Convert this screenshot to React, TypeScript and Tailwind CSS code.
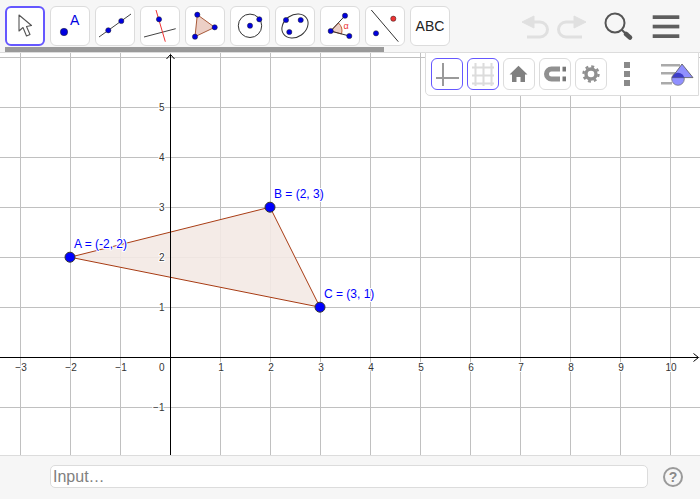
const F = { fontFamily: '"Liberation Sans", Arial, sans-serif' };

function Btn({ children, active }: { children: React.ReactNode; active?: boolean }) {
  return (
    <div className={active ? "w-[40px] h-[40px] shrink-0 rounded-[6px] border-2 border-[#6557ff] bg-white flex items-center justify-center" : "w-[40px] h-[40px] shrink-0 rounded-[6px] border border-[#dcdcdc] bg-white flex items-center justify-center"}>
      <svg width="38" height="38" viewBox="0 0 38 38" className="shrink-0">{children}</svg>
    </div>
  );
}
const P = ({ x, y, r = 3, c = "#0000e0" }: { x: number; y: number; r?: number; c?: string }) => (
  <circle cx={x} cy={y} r={r} fill={c} stroke="#222" strokeWidth="0.5" />
);

function Tools() {
  return (
    <div className="flex gap-[5px]">
      <Btn active>
        <path d="M13 8 L13 24 L17 20.5 L20.5 29 L24 27.5 L20.5 19.5 L25.5 18.5 Z" fill="#fff" stroke="#555" strokeWidth="1.1" strokeLinejoin="round" />
      </Btn>
      <Btn>
        <circle cx="13" cy="25" r="3.7" fill="#0000e0" stroke="#222" strokeWidth="0.5" />
        <text x="19" y="18" fontSize="14" fill="#0000e0" style={F}>A</text>
      </Btn>
      <Btn>
        <line x1="3" y1="30" x2="35" y2="7" stroke="#444" strokeWidth="1" />
        <P x={12.3} y={23.3} r={2.6} /><P x={25.3} y={14} r={2.6} />
      </Btn>
      <Btn>
        <line x1="3" y1="30" x2="34.7" y2="21.7" stroke="#444" strokeWidth="1" />
        <line x1="15" y1="3" x2="24.3" y2="34.7" stroke="#ee3333" strokeWidth="1" />
        <P x={18} y={12.3} r={2.6} />
      </Btn>
      <Btn>
        <path d="M11.3 7.7 L9 29.7 L28.7 20.3 Z" fill="#eccfc6" stroke="#a85a3a" strokeWidth="1" />
        <P x={11.3} y={7.7} r={2.6} /><P x={9} y={29.7} r={2.6} /><P x={28.7} y={20.3} r={2.6} />
      </Btn>
      <Btn>
        <circle cx="19" cy="18.8" r="11.7" fill="none" stroke="#333" strokeWidth="1" />
        <P x={19} y={18.7} r={2.6} /><P x={28.3} y={12.3} r={2.6} />
      </Btn>
      <Btn>
        <ellipse cx="19" cy="19" rx="14" ry="11" fill="none" stroke="#333" strokeWidth="1" transform="rotate(-35 19 19)" />
        <P x={10} y={13} r={2.6} /><P x={24.7} y={13} r={2.6} /><P x={13.3} y={25} r={2.6} />
      </Btn>
      <Btn>
        <path d="M9.7 24 L17.5 16 A11 11 0 0 1 20.5 27 Z" fill="#eccfc6" stroke="#c0603a" strokeWidth="1" />
        <line x1="9.7" y1="24" x2="24" y2="8.7" stroke="#333" strokeWidth="1" />
        <line x1="9.7" y1="24" x2="28.3" y2="29" stroke="#333" strokeWidth="1" />
        <P x={9.7} y={24} r={2.6} /><P x={24} y={8.7} r={2.6} /><P x={28.3} y={29} r={2.6} />
        <text x="22.5" y="22" fontSize="9" fill="#ee3333" style={F}>α</text>
      </Btn>
      <Btn>
        <line x1="5.3" y1="3" x2="32.3" y2="34.7" stroke="#333" strokeWidth="1" />
        <P x={10} y={26.3} r={2.6} /><P x={27.3} y={11.7} r={2.6} c="#ee3333" />
      </Btn>
      <div className="w-[40px] h-[40px] shrink-0 rounded-[6px] border border-[#dcdcdc] bg-white flex items-center justify-center text-[14px] text-[#222]" style={F}>ABC</div>
    </div>
  );
}

function Header() {
  return (
    <div className="h-[53px] shrink-0 bg-[#f6f6f6] relative flex pl-[5px] pt-[6px] border-b border-[#dcdcdc]">
      <Tools />
      <div className="absolute left-[5px] top-[47px] w-[379px] h-[5px] bg-[#9a9a9a]" />
      <div className="ml-auto pr-[6px] flex items-start">
        <svg width="190" height="40" viewBox="0 0 190 40" className="-mt-[2px]" fill="none">
          <g stroke="#e0e0e0" strokeWidth="3">
            <path d="M30 18 H36 A7.5 7.5 0 0 1 36 33 H23" />
            <path d="M30 12 L18 18 L30 24 Z" fill="#e0e0e0" strokeWidth="1" />
            <path d="M70 18 H62 A7.5 7.5 0 0 0 62 33 H78" />
            <path d="M70 12 L82 18 L70 24 Z" fill="#e0e0e0" strokeWidth="1" />
          </g>
          <circle cx="111" cy="19" r="9.5" stroke="#555" strokeWidth="2" />
          <line x1="118" y1="26" x2="122" y2="30" stroke="#555" strokeWidth="2" />
          <line x1="122" y1="30" x2="126" y2="33.5" stroke="#555" strokeWidth="4.6" strokeLinecap="round" />
          <g fill="#5e5e5e">
            <rect x="148.7" y="11.3" width="26.6" height="3.7" />
            <rect x="148.7" y="20.7" width="26.6" height="3.7" />
            <rect x="148.7" y="30.3" width="26.6" height="3.7" />
          </g>
        </svg>
      </div>
    </div>
  );
}

function Plot() {
  const xs = Array.from({ length: 14 }, (_, i) => 20.5 + i * 50);
  const ys = Array.from({ length: 8 }, (_, i) => 57.5 + i * 50);
  const xl = [-3, -2, -1, 1, 2, 3, 4, 5, 6, 7, 8, 9, 10];
  const yl = [5, 4, 3, 2, 1, -1];
  const fmt = (n: number) => (n < 0 ? "\u2212" + -n : String(n));
  const halo = { paintOrder: "stroke" as const, stroke: "#fff", strokeWidth: 2, strokeLinejoin: "round" as const };
  const pts = "70,257.2 270,207.2 320,307.2";
  return (
    <svg width="700" height="402" viewBox="0 53 700 402" className="block shrink-0" style={F}>
      <rect x="0" y="53" width="700" height="402" fill="#fff" />
      {xs.map((x) => <line key={x} x1={x} x2={x} y1="53" y2="455" stroke="#c0c0c0" strokeWidth="1" />)}
      {ys.map((y) => <line key={y} y1={y} y2={y} x1="0" x2="700" stroke="#c0c0c0" strokeWidth="1" />)}
      <polygon points={pts} fill="#f3e9e4" fillOpacity="0.9" />
      <polygon points={pts} fill="none" stroke="#a83c14" strokeWidth="1" />
      <line x1="170.5" x2="170.5" y1="55" y2="455" stroke="#000" />
      <line y1="357.5" y2="357.5" x1="0" x2="698" stroke="#000" />
      <path d="M166.5 59 L170.5 54.5 L174.5 59" fill="none" stroke="#000" />
      <path d="M693.5 353.5 L698.5 357.5 L693.5 361.5" fill="none" stroke="#000" />
      {xl.map((n) => (
        <text key={n} x={171 + n * 50} y="371" fontSize="10" fill="#333" textAnchor="middle" {...halo}>{fmt(n)}</text>
      ))}
      {yl.map((n) => (
        <text key={n} x="164.5" y={361 - n * 50} fontSize="10" fill="#333" textAnchor="end" {...halo}>{fmt(n)}</text>
      ))}
      <text x="164.5" y="371" fontSize="10" fill="#333" textAnchor="end" {...halo}>0</text>
      {[[70, 257.2], [270, 207.2], [320, 307.2]].map(([x, y]) => (
        <circle key={x} cx={x} cy={y} r="5" fill="#0000ff" stroke="#333" strokeWidth="1" />
      ))}
      <text x="74" y="248" fontSize="12" fill="#0000ff" {...halo}>A = (-2, 2)</text>
      <text x="274" y="198" fontSize="12" fill="#0000ff" {...halo}>B = (2, 3)</text>
      <text x="324" y="298" fontSize="12" fill="#0000ff" {...halo}>C = (3, 1)</text>
    </svg>
  );
}

function SBtn({ children, active }: { children: React.ReactNode; active?: boolean }) {
  return (
    <div className={active ? "w-[32px] h-[32px] rounded-[6px] border border-[#6557ff] bg-white" : "w-[32px] h-[32px] rounded-[6px] border border-[#dcdcdc] bg-white"}>
      <svg width="30" height="30" viewBox="0 0 30 30">{children}</svg>
    </div>
  );
}

function StylePanel() {
  return (
    <div className="absolute left-[425px] top-[52px] w-[274px] h-[44px] bg-white border border-[#dcdcdc] rounded-bl-[5px] flex items-center pl-[5px] gap-[4px]">
      <SBtn active>
        <path d="M4 19H27M11 4V27" stroke="#9a9a9a" strokeWidth="2" fill="none" />
      </SBtn>
      <SBtn active>
        <path d="M4 8.5H26M4 16.5H26M4 24.5H26M7.5 4V27M15.5 4V27M23.5 4V27" stroke="#dcdcdc" strokeWidth="2" fill="none" />
      </SBtn>
      <SBtn>
        <path d="M14.5 6.7 L23.5 15.5 H21 V23 H16.5 V18 H12.5 V23 H8 V15.5 H5.5 Z" fill="#808080" />
      </SBtn>
      <SBtn>
        <path d="M20 10 H11.5 A5 5 0 0 0 11.5 20 H20" fill="none" stroke="#909090" strokeWidth="5" />
        <rect x="22.5" y="7.7" width="3.5" height="4.8" fill="#777" />
        <rect x="22.5" y="17.5" width="3.5" height="4.8" fill="#777" />
      </SBtn>
      <SBtn>
        <circle cx="15" cy="15" r="5" fill="none" stroke="#909090" strokeWidth="3.4" />
        <circle cx="15" cy="15" r="7.5" fill="none" stroke="#909090" strokeWidth="2.4" strokeDasharray="2.94 2.95" />
      </SBtn>
      <svg width="20" height="30" viewBox="0 0 20 30" className="ml-[4px]">
        <rect x="9" y="3" width="6" height="6" fill="#8a8a8a" />
        <rect x="9" y="12" width="6" height="6" fill="#8a8a8a" />
        <rect x="9" y="21" width="6" height="6" fill="#8a8a8a" />
      </svg>
      <svg width="40" height="30" viewBox="0 0 40 30" className="ml-[17px]">
        <defs>
          <clipPath id="tri"><path d="M26 5 L37 18.6 H16 Z" /></clipPath>
        </defs>
        <g fill="#aaaaaa">
          <rect x="5" y="5" width="19" height="2.5" /><rect x="5" y="13" width="15" height="2.5" /><rect x="5" y="23" width="11" height="2.5" />
        </g>
        <circle cx="22" cy="20" r="6.3" fill="#9090ff" stroke="#777" strokeWidth="0.8" />
        <path d="M26 5 L37 18.6 H16 Z" fill="#9090ff" stroke="#555" strokeWidth="0.8" />
        <circle cx="22" cy="20" r="6.3" fill="#3c3cc8" clipPath="url(#tri)" />
      </svg>
    </div>
  );
}

function Footer() {
  return (
    <div className="h-[44px] shrink-0 bg-[#f6f6f6] border-t border-[#dcdcdc] flex items-start pt-[9px] pl-[50px]" style={F}>
      <div className="w-[598px] h-[23px] bg-white border border-[#dcdcdc] rounded-[5px] pl-[2px] text-[16px] leading-[21px] text-[#808080]">Input…</div>
      <div className="ml-[15px] mt-[2px] w-[20px] h-[20px] rounded-full border-2 border-[#9a9a9a] flex items-center justify-center text-[14px] font-bold text-[#8a8a8a]">?</div>
    </div>
  );
}

export default function App() {
  return (
    <div className="w-[700px] h-[500px] relative overflow-hidden bg-white flex flex-col" style={F}>
      <Header />
      <Plot />
      <StylePanel />
      <Footer />
    </div>
  );
}
